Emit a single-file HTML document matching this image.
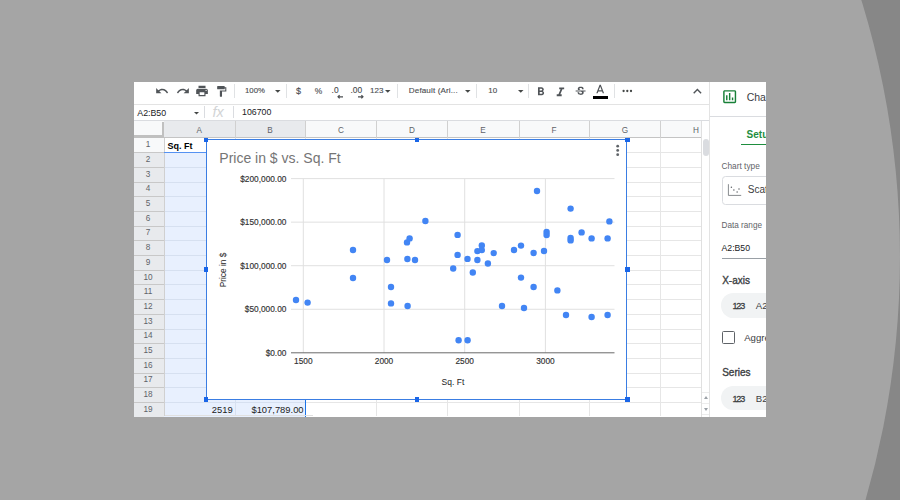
<!DOCTYPE html><html><head><meta charset="utf-8"><style>
html,body{margin:0;padding:0;}
body{width:900px;height:500px;overflow:hidden;position:relative;background:#a5a5a5;font-family:"Liberation Sans", sans-serif;}
div{box-sizing:border-box;}
svg{position:absolute;overflow:visible;}
</style></head><body>
<svg style="left:0;top:0" width="900" height="500" viewBox="0 0 900 500"><path fill="#878787" fill-rule="evenodd" d="M0 0H900V500H0Z M26.31 256.98 m-873.66 0 a873.66 873.66 0 1 0 1747.32 0 a873.66 873.66 0 1 0 -1747.32 0Z"/></svg>
<div style="position:absolute;left:134px;top:82px;width:632px;height:334.5px;background:#fff;overflow:hidden;">
<div style="position:absolute;left:-134px;top:-82px;width:900px;height:500px;">
<div style="position:absolute;left:134px;top:103.6px;width:575px;height:1px;background:#e3e3e3"></div>
<div style="position:absolute;left:134px;top:119.8px;width:575px;height:1px;background:#dadce0"></div>
<svg style="left:155.33px;top:83.905px" width="14.04" height="14.04" viewBox="0 0 24 24"><path fill="#505458" d="M12.5 8c-2.65 0-5.05.99-6.9 2.6L2 7v9h9l-3.62-3.62c1.39-1.16 3.16-1.88 5.12-1.88 3.54 0 6.55 2.31 7.6 5.5l2.37-.78C21.08 11.03 17.15 8 12.5 8z"/></svg>
<svg style="left:175.5991px;top:83.905px" width="14.04" height="14.04" viewBox="0 0 24 24"><path fill="#505458" d="M18.4 10.6C16.55 8.99 14.15 8 11.5 8c-4.65 0-8.58 3.03-9.96 7.22L3.9 16c1.05-3.19 4.05-5.5 7.6-5.5 1.95 0 3.73.72 5.12 1.88L13 16h9V7l-3.6 3.6z"/></svg>
<svg style="left:194.63000000000002px;top:84.245px" width="14.04" height="14.04" viewBox="0 0 24 24"><path fill="#505458" d="M19 8H5c-1.66 0-3 1.34-3 3v6h4v4h12v-4h4v-6c0-1.660-1.34-3-3-3zm-3 11H8v-5h8v5zm3-7c-.55 0-1-.45-1-1s.45-1 1-1 1 .45 1 1-.45 1-1 1zm-1-9H6v4h12V3z"/></svg>
<svg style="left:214.64000000000001px;top:85.0px" width="12.96" height="12.96" viewBox="0 0 24 24"><path fill="#505458" d="M18 4V3c0-.55-.45-1-1-1H5c-.55 0-1 .45-1 1v4c0 .55.45 1 1 1h12c.55 0 1-.45 1-1V6h1v4H9v11c0 .55.45 1 1 1h2c.55 0 1-.45 1-1v-9h8V4h-3z"/></svg>
<div style="position:absolute;left:234px;top:84px;width:1px;height:13.5px;background:#e0e2e4"></div>
<div style="position:absolute;left:286px;top:84px;width:1px;height:13.5px;background:#e0e2e4"></div>
<div style="position:absolute;left:397px;top:84px;width:1px;height:13.5px;background:#e0e2e4"></div>
<div style="position:absolute;left:476px;top:84px;width:1px;height:13.5px;background:#e0e2e4"></div>
<div style="position:absolute;left:528px;top:84px;width:1px;height:13.5px;background:#e0e2e4"></div>
<div style="position:absolute;left:614px;top:84px;width:1px;height:13.5px;background:#e0e2e4"></div>
<div style="position:absolute;left:245px;top:87px;font-size:7.8px;line-height:7.8px;color:#4a4d50;font-weight:normal;white-space:nowrap;-webkit-text-stroke:0.12px #4a4d50;">100%</div>
<svg style="left:274.5px;top:90px" width="5.5" height="2.75" viewBox="0 0 10 5"><path fill="#444746" d="M0 0L5 5L10 0Z"/></svg>
<div style="position:absolute;left:296px;top:86.6px;font-size:9px;line-height:9px;color:#4a4d50;font-weight:normal;white-space:nowrap;-webkit-text-stroke:0.12px #4a4d50;">$</div>
<div style="position:absolute;left:314.8px;top:86.6px;font-size:8.4px;line-height:8.4px;color:#4a4d50;font-weight:normal;white-space:nowrap;-webkit-text-stroke:0.12px #4a4d50;">%</div>
<div style="position:absolute;left:331.6px;top:86.4px;font-size:8.4px;line-height:8.4px;color:#4a4d50;font-weight:normal;white-space:nowrap;-webkit-text-stroke:0.12px #4a4d50;">.0</div>
<svg style="left:337px;top:95px" width="6" height="4" viewBox="0 0 6 4"><path d="M6 1.8H1M2.6 0.2L1 1.8L2.6 3.4" stroke="#4a4d50" stroke-width="1.15" fill="none"/></svg>
<div style="position:absolute;left:350.4px;top:86.4px;font-size:8.4px;line-height:8.4px;color:#4a4d50;font-weight:normal;white-space:nowrap;-webkit-text-stroke:0.12px #4a4d50;">.00</div>
<svg style="left:358px;top:95px" width="6" height="4" viewBox="0 0 6 4"><path d="M0 1.8H5M3.4 0.2L5 1.8L3.4 3.4" stroke="#4a4d50" stroke-width="1.15" fill="none"/></svg>
<div style="position:absolute;left:370px;top:86.8px;font-size:8px;line-height:8px;color:#4a4d50;font-weight:normal;white-space:nowrap;-webkit-text-stroke:0.12px #4a4d50;">123</div>
<svg style="left:385.2px;top:90px" width="5.5" height="2.75" viewBox="0 0 10 5"><path fill="#444746" d="M0 0L5 5L10 0Z"/></svg>
<div style="position:absolute;left:408.8px;top:86.6px;font-size:8.1px;line-height:8.1px;color:#4a4d50;font-weight:normal;white-space:nowrap;-webkit-text-stroke:0.12px #4a4d50;letter-spacing:0.12px;">Default (Ari...</div>
<svg style="left:464.8px;top:90px" width="5.5" height="2.75" viewBox="0 0 10 5"><path fill="#444746" d="M0 0L5 5L10 0Z"/></svg>
<div style="position:absolute;left:488.2px;top:86.9px;font-size:8px;line-height:8px;color:#4a4d50;font-weight:normal;white-space:nowrap;-webkit-text-stroke:0.12px #4a4d50;">10</div>
<svg style="left:517.5px;top:90px" width="5.5" height="2.75" viewBox="0 0 10 5"><path fill="#444746" d="M0 0L5 5L10 0Z"/></svg>
<svg style="left:534.01px;top:85.22px" width="13.68" height="13.68" viewBox="0 0 24 24"><path fill="#505458" d="M15.6 10.79c.97-.67 1.65-1.77 1.65-2.79 0-2.260-1.75-4-4-4H7v14h7.04c2.09 0 3.71-1.7 3.71-3.790 0-1.52-.86-2.82-2.15-3.42zM10 6.5h3c.83 0 1.5.67 1.5 1.5s-.67 1.5-1.5 1.5h-3v-3zm3.5 9H10v-3h3.5c.83 0 1.5.67 1.5 1.5s-.67 1.5-1.5 1.5z"/></svg>
<svg style="left:552.78px;top:84.52px" width="14.879999999999999" height="14.879999999999999" viewBox="0 0 24 24"><path fill="#505458" d="M10 4v3h2.21l-3.42 8H6v3h8v-3h-2.21l3.42-8H18V4z"/></svg>
<svg style="left:573.85px;top:85.465px" width="13.200000000000001" height="13.200000000000001" viewBox="0 0 24 24"><path fill="#505458" d="M7.24 8.75c-.26-.48-.39-1.03-.39-1.67 0-.61.13-1.16.4-1.67.26-.5.63-.93 1.11-1.29.48-.35 1.05-.63 1.7-.83.66-.19 1.39-.29 2.18-.29.81 0 1.54.11 2.21.34.66.22 1.23.54 1.69.94.47.4.83.88 1.080 1.43.25.55.38 1.15.38 1.81h-3.01c0-.31-.05-.59-.15-.85-.09-.27-.24-.49-.44-.68-.2-.19-.45-.33-.75-.44-.3-.1-.66-.16-1.06-.16-.39 0-.74.04-1.03.13-.29.09-.53.21-.72.36-.19.16-.34.34-.44.55-.1.21-.15.43-.15.66 0 .48.25.88.74 1.21.38.25.77.48 1.41.7H7.39c-.05-.08-.11-.17-.15-.25zM21 12v-2H3v2h9.62c.18.07.4.14.55.2.37.17.66.34.87.51.21.17.35.36.43.57.07.2.11.43.11.69 0 .23-.05.45-.14.66-.09.2-.23.38-.42.53-.19.15-.42.26-.71.35-.29.08-.63.13-1.01.13-.43 0-.83-.04-1.18-.13s-.66-.23-.91-.42c-.25-.19-.45-.44-.59-.75-.14-.31-.25-.76-.25-1.21H6.4c0 .55.08 1.13.24 1.58.16.45.37.85.65 1.21.28.35.6.66.98.92.37.26.78.48 1.22.65.44.17.9.3 1.38.39.48.08.96.13 1.44.13.8 0 1.53-.09 2.18-.28s1.21-.45 1.67-.79c.46-.34.82-.77 1.07-1.27s.38-1.07.38-1.71c0-.6-.1-1.14-.31-1.61-.05-.11-.11-.23-.17-.33H21z"/></svg>
<svg style="left:593.2px;top:83.2px" width="14.399999999999999" height="14.399999999999999" viewBox="0 0 24 24"><path fill="#505458" d="M11 3L5.5 17h2.25l1.12-3h6.25l1.12 3h2.25L13 3h-2zm-1.38 9L12 5.67 14.38 12H9.62z"/></svg>
<div style="position:absolute;left:593.2px;top:96.2px;width:14.8px;height:2.6px;background:#000"></div>
<svg style="left:620px;top:88px" width="14" height="6" viewBox="0 0 14 6"><circle cx="3.6" cy="3" r="1.15" fill="#444746"/><circle cx="7.3" cy="3" r="1.15" fill="#444746"/><circle cx="11" cy="3" r="1.15" fill="#444746"/></svg>
<svg style="left:688.8px;top:83.0px" width="16.799999999999997" height="16.799999999999997" viewBox="0 0 24 24"><path fill="#505458" d="M12 8l-6 6 1.41 1.41L12 10.83l4.59 4.58L18 14z"/></svg>
<div style="position:absolute;left:137.3px;top:108.6px;font-size:8.8px;line-height:8.8px;color:#202124;font-weight:normal;white-space:nowrap;">A2:B50</div>
<svg style="left:194px;top:112px" width="5" height="2.5" viewBox="0 0 10 5"><path fill="#444746" d="M0 0L5 5L10 0Z"/></svg>
<div style="position:absolute;left:204.3px;top:106px;width:1px;height:12px;background:#dadce0"></div>
<div style="position:absolute;left:212.6px;top:104.6px;font-size:14.5px;line-height:14.5px;color:#d2d4d6;font-weight:normal;white-space:nowrap;font-family:"Liberation Serif",serif;"><i>fx</i></div>
<div style="position:absolute;left:233.2px;top:106px;width:1px;height:12px;background:#dadce0"></div>
<div style="position:absolute;left:242px;top:108.4px;font-size:8.8px;line-height:8.8px;color:#202124;font-weight:normal;white-space:nowrap;">106700</div>
<div style="position:absolute;left:134px;top:120.5px;width:568px;height:17.099999999999994px;background:#f8f9fa"></div>
<div style="position:absolute;left:164px;top:120.5px;width:141.39999999999998px;height:17.099999999999994px;background:#e8eaed"></div>
<div style="position:absolute;left:134px;top:137.4px;width:568px;height:1px;background:#c4c4c4"></div>
<div style="position:absolute;left:161.5px;top:122px;width:2.5px;height:15.599999999999994px;background:#c0c0c0"></div>
<div style="position:absolute;left:134px;top:134.8px;width:28px;height:2.8px;background:#c0c0c0"></div>
<div style="position:absolute;left:235px;top:120.5px;width:1px;height:17.099999999999994px;background:#d0d0d0"></div>
<div style="position:absolute;left:164px;top:126.8px;width:70.69999999999999px;text-align:center;font-size:8.2px;line-height:8px;color:#5f6368">A</div>
<div style="position:absolute;left:305px;top:120.5px;width:1px;height:17.099999999999994px;background:#d0d0d0"></div>
<div style="position:absolute;left:234.7px;top:126.8px;width:70.69999999999999px;text-align:center;font-size:8.2px;line-height:8px;color:#5f6368">B</div>
<div style="position:absolute;left:376px;top:120.5px;width:1px;height:17.099999999999994px;background:#d0d0d0"></div>
<div style="position:absolute;left:305.4px;top:126.8px;width:70.90000000000003px;text-align:center;font-size:8.2px;line-height:8px;color:#5f6368">C</div>
<div style="position:absolute;left:447px;top:120.5px;width:1px;height:17.099999999999994px;background:#d0d0d0"></div>
<div style="position:absolute;left:376.3px;top:126.8px;width:71.19999999999999px;text-align:center;font-size:8.2px;line-height:8px;color:#5f6368">D</div>
<div style="position:absolute;left:519px;top:120.5px;width:1px;height:17.099999999999994px;background:#d0d0d0"></div>
<div style="position:absolute;left:447.5px;top:126.8px;width:71.20000000000005px;text-align:center;font-size:8.2px;line-height:8px;color:#5f6368">E</div>
<div style="position:absolute;left:589px;top:120.5px;width:1px;height:17.099999999999994px;background:#d0d0d0"></div>
<div style="position:absolute;left:518.7px;top:126.8px;width:70.79999999999995px;text-align:center;font-size:8.2px;line-height:8px;color:#5f6368">F</div>
<div style="position:absolute;left:660px;top:120.5px;width:1px;height:17.099999999999994px;background:#d0d0d0"></div>
<div style="position:absolute;left:589.5px;top:126.8px;width:71.0px;text-align:center;font-size:8.2px;line-height:8px;color:#5f6368">G</div>
<div style="position:absolute;left:701px;top:120.5px;width:1px;height:17.099999999999994px;background:#d0d0d0"></div>
<div style="position:absolute;left:660.5px;top:126.8px;width:70.8px;text-align:center;font-size:8.2px;line-height:8px;color:#5f6368">H</div>
<div style="position:absolute;left:134px;top:137.6px;width:30px;height:15.2px;background:#f8f9fa"></div>
<div style="position:absolute;left:134px;top:141.2px;width:28px;text-align:center;font-size:8.2px;line-height:8px;color:#5f6368">1</div>
<div style="position:absolute;left:134px;top:152.29999999999998px;width:30px;height:15.2px;background:#e8eaed"></div>
<div style="position:absolute;left:134px;top:155.89999999999998px;width:28px;text-align:center;font-size:8.2px;line-height:8px;color:#5f6368">2</div>
<div style="position:absolute;left:164px;top:152.29999999999998px;width:141.39999999999998px;height:15.2px;background:#e8f0fe"></div>
<div style="position:absolute;left:134px;top:167.0px;width:30px;height:15.2px;background:#e8eaed"></div>
<div style="position:absolute;left:134px;top:170.6px;width:28px;text-align:center;font-size:8.2px;line-height:8px;color:#5f6368">3</div>
<div style="position:absolute;left:164px;top:167.0px;width:141.39999999999998px;height:15.2px;background:#e8f0fe"></div>
<div style="position:absolute;left:134px;top:181.7px;width:30px;height:15.2px;background:#e8eaed"></div>
<div style="position:absolute;left:134px;top:185.29999999999998px;width:28px;text-align:center;font-size:8.2px;line-height:8px;color:#5f6368">4</div>
<div style="position:absolute;left:164px;top:181.7px;width:141.39999999999998px;height:15.2px;background:#e8f0fe"></div>
<div style="position:absolute;left:134px;top:196.39999999999998px;width:30px;height:15.2px;background:#e8eaed"></div>
<div style="position:absolute;left:134px;top:199.99999999999997px;width:28px;text-align:center;font-size:8.2px;line-height:8px;color:#5f6368">5</div>
<div style="position:absolute;left:164px;top:196.39999999999998px;width:141.39999999999998px;height:15.2px;background:#e8f0fe"></div>
<div style="position:absolute;left:134px;top:211.1px;width:30px;height:15.2px;background:#e8eaed"></div>
<div style="position:absolute;left:134px;top:214.7px;width:28px;text-align:center;font-size:8.2px;line-height:8px;color:#5f6368">6</div>
<div style="position:absolute;left:164px;top:211.1px;width:141.39999999999998px;height:15.2px;background:#e8f0fe"></div>
<div style="position:absolute;left:134px;top:225.79999999999998px;width:30px;height:15.2px;background:#e8eaed"></div>
<div style="position:absolute;left:134px;top:229.39999999999998px;width:28px;text-align:center;font-size:8.2px;line-height:8px;color:#5f6368">7</div>
<div style="position:absolute;left:164px;top:225.79999999999998px;width:141.39999999999998px;height:15.2px;background:#e8f0fe"></div>
<div style="position:absolute;left:134px;top:240.5px;width:30px;height:15.2px;background:#e8eaed"></div>
<div style="position:absolute;left:134px;top:244.1px;width:28px;text-align:center;font-size:8.2px;line-height:8px;color:#5f6368">8</div>
<div style="position:absolute;left:164px;top:240.5px;width:141.39999999999998px;height:15.2px;background:#e8f0fe"></div>
<div style="position:absolute;left:134px;top:255.2px;width:30px;height:15.2px;background:#e8eaed"></div>
<div style="position:absolute;left:134px;top:258.8px;width:28px;text-align:center;font-size:8.2px;line-height:8px;color:#5f6368">9</div>
<div style="position:absolute;left:164px;top:255.2px;width:141.39999999999998px;height:15.2px;background:#e8f0fe"></div>
<div style="position:absolute;left:134px;top:269.9px;width:30px;height:15.2px;background:#e8eaed"></div>
<div style="position:absolute;left:134px;top:273.5px;width:28px;text-align:center;font-size:8.2px;line-height:8px;color:#5f6368">10</div>
<div style="position:absolute;left:164px;top:269.9px;width:141.39999999999998px;height:15.2px;background:#e8f0fe"></div>
<div style="position:absolute;left:134px;top:284.6px;width:30px;height:15.2px;background:#e8eaed"></div>
<div style="position:absolute;left:134px;top:288.20000000000005px;width:28px;text-align:center;font-size:8.2px;line-height:8px;color:#5f6368">11</div>
<div style="position:absolute;left:164px;top:284.6px;width:141.39999999999998px;height:15.2px;background:#e8f0fe"></div>
<div style="position:absolute;left:134px;top:299.29999999999995px;width:30px;height:15.2px;background:#e8eaed"></div>
<div style="position:absolute;left:134px;top:302.9px;width:28px;text-align:center;font-size:8.2px;line-height:8px;color:#5f6368">12</div>
<div style="position:absolute;left:164px;top:299.29999999999995px;width:141.39999999999998px;height:15.2px;background:#e8f0fe"></div>
<div style="position:absolute;left:134px;top:314.0px;width:30px;height:15.2px;background:#e8eaed"></div>
<div style="position:absolute;left:134px;top:317.6px;width:28px;text-align:center;font-size:8.2px;line-height:8px;color:#5f6368">13</div>
<div style="position:absolute;left:164px;top:314.0px;width:141.39999999999998px;height:15.2px;background:#e8f0fe"></div>
<div style="position:absolute;left:134px;top:328.7px;width:30px;height:15.2px;background:#e8eaed"></div>
<div style="position:absolute;left:134px;top:332.3px;width:28px;text-align:center;font-size:8.2px;line-height:8px;color:#5f6368">14</div>
<div style="position:absolute;left:164px;top:328.7px;width:141.39999999999998px;height:15.2px;background:#e8f0fe"></div>
<div style="position:absolute;left:134px;top:343.4px;width:30px;height:15.2px;background:#e8eaed"></div>
<div style="position:absolute;left:134px;top:347.0px;width:28px;text-align:center;font-size:8.2px;line-height:8px;color:#5f6368">15</div>
<div style="position:absolute;left:164px;top:343.4px;width:141.39999999999998px;height:15.2px;background:#e8f0fe"></div>
<div style="position:absolute;left:134px;top:358.1px;width:30px;height:15.2px;background:#e8eaed"></div>
<div style="position:absolute;left:134px;top:361.70000000000005px;width:28px;text-align:center;font-size:8.2px;line-height:8px;color:#5f6368">16</div>
<div style="position:absolute;left:164px;top:358.1px;width:141.39999999999998px;height:15.2px;background:#e8f0fe"></div>
<div style="position:absolute;left:134px;top:372.79999999999995px;width:30px;height:15.2px;background:#e8eaed"></div>
<div style="position:absolute;left:134px;top:376.4px;width:28px;text-align:center;font-size:8.2px;line-height:8px;color:#5f6368">17</div>
<div style="position:absolute;left:164px;top:372.79999999999995px;width:141.39999999999998px;height:15.2px;background:#e8f0fe"></div>
<div style="position:absolute;left:134px;top:387.5px;width:30px;height:15.2px;background:#e8eaed"></div>
<div style="position:absolute;left:134px;top:391.1px;width:28px;text-align:center;font-size:8.2px;line-height:8px;color:#5f6368">18</div>
<div style="position:absolute;left:164px;top:387.5px;width:141.39999999999998px;height:15.2px;background:#e8f0fe"></div>
<div style="position:absolute;left:134px;top:402.19999999999993px;width:30px;height:15.2px;background:#e8eaed"></div>
<div style="position:absolute;left:134px;top:405.79999999999995px;width:28px;text-align:center;font-size:8.2px;line-height:8px;color:#5f6368">19</div>
<div style="position:absolute;left:164px;top:402.19999999999993px;width:141.39999999999998px;height:15.2px;background:#e8f0fe"></div>
<div style="position:absolute;left:164px;top:152px;width:537px;height:1px;background:#e6e6e6"></div>
<div style="position:absolute;left:164px;top:152px;width:141px;height:1px;background:#d6e0f0"></div>
<div style="position:absolute;left:134px;top:152px;width:30px;height:1px;background:#c8c8c8"></div>
<div style="position:absolute;left:164px;top:167px;width:537px;height:1px;background:#e6e6e6"></div>
<div style="position:absolute;left:164px;top:167px;width:141px;height:1px;background:#d6e0f0"></div>
<div style="position:absolute;left:134px;top:167px;width:30px;height:1px;background:#c8c8c8"></div>
<div style="position:absolute;left:164px;top:182px;width:537px;height:1px;background:#e6e6e6"></div>
<div style="position:absolute;left:164px;top:182px;width:141px;height:1px;background:#d6e0f0"></div>
<div style="position:absolute;left:134px;top:182px;width:30px;height:1px;background:#c8c8c8"></div>
<div style="position:absolute;left:164px;top:196px;width:537px;height:1px;background:#e6e6e6"></div>
<div style="position:absolute;left:164px;top:196px;width:141px;height:1px;background:#d6e0f0"></div>
<div style="position:absolute;left:134px;top:196px;width:30px;height:1px;background:#c8c8c8"></div>
<div style="position:absolute;left:164px;top:211px;width:537px;height:1px;background:#e6e6e6"></div>
<div style="position:absolute;left:164px;top:211px;width:141px;height:1px;background:#d6e0f0"></div>
<div style="position:absolute;left:134px;top:211px;width:30px;height:1px;background:#c8c8c8"></div>
<div style="position:absolute;left:164px;top:226px;width:537px;height:1px;background:#e6e6e6"></div>
<div style="position:absolute;left:164px;top:226px;width:141px;height:1px;background:#d6e0f0"></div>
<div style="position:absolute;left:134px;top:226px;width:30px;height:1px;background:#c8c8c8"></div>
<div style="position:absolute;left:164px;top:240px;width:537px;height:1px;background:#e6e6e6"></div>
<div style="position:absolute;left:164px;top:240px;width:141px;height:1px;background:#d6e0f0"></div>
<div style="position:absolute;left:134px;top:240px;width:30px;height:1px;background:#c8c8c8"></div>
<div style="position:absolute;left:164px;top:255px;width:537px;height:1px;background:#e6e6e6"></div>
<div style="position:absolute;left:164px;top:255px;width:141px;height:1px;background:#d6e0f0"></div>
<div style="position:absolute;left:134px;top:255px;width:30px;height:1px;background:#c8c8c8"></div>
<div style="position:absolute;left:164px;top:270px;width:537px;height:1px;background:#e6e6e6"></div>
<div style="position:absolute;left:164px;top:270px;width:141px;height:1px;background:#d6e0f0"></div>
<div style="position:absolute;left:134px;top:270px;width:30px;height:1px;background:#c8c8c8"></div>
<div style="position:absolute;left:164px;top:284px;width:537px;height:1px;background:#e6e6e6"></div>
<div style="position:absolute;left:164px;top:284px;width:141px;height:1px;background:#d6e0f0"></div>
<div style="position:absolute;left:134px;top:284px;width:30px;height:1px;background:#c8c8c8"></div>
<div style="position:absolute;left:164px;top:299px;width:537px;height:1px;background:#e6e6e6"></div>
<div style="position:absolute;left:164px;top:299px;width:141px;height:1px;background:#d6e0f0"></div>
<div style="position:absolute;left:134px;top:299px;width:30px;height:1px;background:#c8c8c8"></div>
<div style="position:absolute;left:164px;top:314px;width:537px;height:1px;background:#e6e6e6"></div>
<div style="position:absolute;left:164px;top:314px;width:141px;height:1px;background:#d6e0f0"></div>
<div style="position:absolute;left:134px;top:314px;width:30px;height:1px;background:#c8c8c8"></div>
<div style="position:absolute;left:164px;top:329px;width:537px;height:1px;background:#e6e6e6"></div>
<div style="position:absolute;left:164px;top:329px;width:141px;height:1px;background:#d6e0f0"></div>
<div style="position:absolute;left:134px;top:329px;width:30px;height:1px;background:#c8c8c8"></div>
<div style="position:absolute;left:164px;top:343px;width:537px;height:1px;background:#e6e6e6"></div>
<div style="position:absolute;left:164px;top:343px;width:141px;height:1px;background:#d6e0f0"></div>
<div style="position:absolute;left:134px;top:343px;width:30px;height:1px;background:#c8c8c8"></div>
<div style="position:absolute;left:164px;top:358px;width:537px;height:1px;background:#e6e6e6"></div>
<div style="position:absolute;left:164px;top:358px;width:141px;height:1px;background:#d6e0f0"></div>
<div style="position:absolute;left:134px;top:358px;width:30px;height:1px;background:#c8c8c8"></div>
<div style="position:absolute;left:164px;top:373px;width:537px;height:1px;background:#e6e6e6"></div>
<div style="position:absolute;left:164px;top:373px;width:141px;height:1px;background:#d6e0f0"></div>
<div style="position:absolute;left:134px;top:373px;width:30px;height:1px;background:#c8c8c8"></div>
<div style="position:absolute;left:164px;top:387px;width:537px;height:1px;background:#e6e6e6"></div>
<div style="position:absolute;left:164px;top:387px;width:141px;height:1px;background:#d6e0f0"></div>
<div style="position:absolute;left:134px;top:387px;width:30px;height:1px;background:#c8c8c8"></div>
<div style="position:absolute;left:164px;top:402px;width:537px;height:1px;background:#e6e6e6"></div>
<div style="position:absolute;left:164px;top:402px;width:141px;height:1px;background:#d6e0f0"></div>
<div style="position:absolute;left:134px;top:402px;width:30px;height:1px;background:#c8c8c8"></div>
<div style="position:absolute;left:164px;top:417px;width:537px;height:1px;background:#e6e6e6"></div>
<div style="position:absolute;left:164px;top:417px;width:141px;height:1px;background:#d6e0f0"></div>
<div style="position:absolute;left:134px;top:417px;width:30px;height:1px;background:#c8c8c8"></div>
<div style="position:absolute;left:164px;top:137.6px;width:1px;height:278.9px;background:#d0d0d0"></div>
<div style="position:absolute;left:235px;top:137.6px;width:1px;height:278.9px;background:#d6e0f0"></div>
<div style="position:absolute;left:305px;top:137.6px;width:1px;height:278.9px;background:#e6e6e6"></div>
<div style="position:absolute;left:376px;top:137.6px;width:1px;height:278.9px;background:#e6e6e6"></div>
<div style="position:absolute;left:447px;top:137.6px;width:1px;height:278.9px;background:#e6e6e6"></div>
<div style="position:absolute;left:519px;top:137.6px;width:1px;height:278.9px;background:#e6e6e6"></div>
<div style="position:absolute;left:589px;top:137.6px;width:1px;height:278.9px;background:#e6e6e6"></div>
<div style="position:absolute;left:660px;top:137.6px;width:1px;height:278.9px;background:#e6e6e6"></div>
<div style="position:absolute;left:701px;top:137.6px;width:1px;height:278.9px;background:#e6e6e6"></div>
<div style="position:absolute;left:164px;top:151.9px;width:141.4px;height:1.1px;background:#5592f2"></div>
<div style="position:absolute;left:304.8px;top:152px;width:1.2px;height:265px;background:#1a73e8"></div>
<div style="position:absolute;left:167.5px;top:141.6px;font-size:9px;line-height:9px;color:#000;font-weight:bold;white-space:nowrap;">Sq. Ft</div>
<div style="position:absolute;left:164px;top:405.4px;width:68.6px;text-align:right;font-size:9.4px;line-height:9px;color:#222">2519</div>
<div style="position:absolute;left:234.7px;top:405.4px;width:68.9px;text-align:right;font-size:9.4px;line-height:9px;color:#222">$107,789.00</div>
<div style="position:absolute;left:165px;top:415.2px;width:148px;height:1px;background:#e0e0e0"></div>
<div style="position:absolute;left:701.5px;top:137.6px;width:8px;height:278.9px;background:#fff"></div>
<div style="position:absolute;left:701.3px;top:120.5px;width:0.8px;height:296.0px;background:#e0e0e0"></div>
<div style="position:absolute;left:703px;top:139px;width:6px;height:17px;background:#dadce0;border-radius:3px"></div>
<div style="position:absolute;left:702px;top:392px;width:7.5px;height:1px;background:#ececec"></div>
<div style="position:absolute;left:702px;top:403.2px;width:7.5px;height:1px;background:#ececec"></div>
<div style="position:absolute;left:702px;top:414.4px;width:7.5px;height:1px;background:#ececec"></div>
<svg style="left:704px;top:396px" width="4" height="3" viewBox="0 0 4 3"><path d="M0 3L2 0L4 3Z" fill="#9aa0a6"/></svg>
<svg style="left:704px;top:407.5px" width="4" height="3" viewBox="0 0 4 3"><path d="M0 0L2 3L4 0Z" fill="#9aa0a6"/></svg>
</div></div>
<div style="position:absolute;left:205.7px;top:138.6px;width:421.7px;height:261.29999999999995px;background:#fff;border:1.5px solid #3a7de3;"></div>
<div style="position:absolute;left:204.0px;top:138.1px;width:4.4px;height:3.6px;background:#1a66e8"></div>
<div style="position:absolute;left:204.0px;top:266.8px;width:4.4px;height:5px;background:#1a66e8"></div>
<div style="position:absolute;left:204.0px;top:397.0px;width:4.4px;height:4.8px;background:#1a66e8"></div>
<div style="position:absolute;left:414.8px;top:138.1px;width:4.4px;height:3.6px;background:#1a66e8"></div>
<div style="position:absolute;left:414.8px;top:397.0px;width:4.4px;height:4.8px;background:#1a66e8"></div>
<div style="position:absolute;left:625.3px;top:138.1px;width:4.4px;height:3.6px;background:#1a66e8"></div>
<div style="position:absolute;left:625.3px;top:266.8px;width:4.4px;height:5px;background:#1a66e8"></div>
<div style="position:absolute;left:625.3px;top:397.0px;width:4.4px;height:4.8px;background:#1a66e8"></div>
<svg style="left:614px;top:143px" width="8" height="14" viewBox="0 0 8 14"><circle cx="3.7" cy="3.2" r="1.4" fill="#5f6368"/><circle cx="3.7" cy="7.4" r="1.4" fill="#5f6368"/><circle cx="3.7" cy="11.7" r="1.4" fill="#5f6368"/></svg>
<div style="position:absolute;left:219.3px;top:151px;font-size:14px;line-height:14px;color:#757575;font-weight:normal;white-space:nowrap;">Price in $ vs. Sq. Ft</div>
<svg style="left:0;top:0" width="900" height="500" viewBox="0 0 900 500"><line x1="291" y1="309.25" x2="614.5" y2="309.25" stroke="#e0e0e0" stroke-width="1"/><line x1="291" y1="265.70000000000005" x2="614.5" y2="265.70000000000005" stroke="#e0e0e0" stroke-width="1"/><line x1="291" y1="222.15000000000003" x2="614.5" y2="222.15000000000003" stroke="#e0e0e0" stroke-width="1"/><line x1="291" y1="178.60000000000002" x2="614.5" y2="178.60000000000002" stroke="#e0e0e0" stroke-width="1"/><line x1="303.3" y1="178.60000000000002" x2="303.3" y2="352.8" stroke="#e0e0e0" stroke-width="1"/><line x1="384.0" y1="178.60000000000002" x2="384.0" y2="352.8" stroke="#e0e0e0" stroke-width="1"/><line x1="464.70000000000005" y1="178.60000000000002" x2="464.70000000000005" y2="352.8" stroke="#e0e0e0" stroke-width="1"/><line x1="545.4000000000001" y1="178.60000000000002" x2="545.4000000000001" y2="352.8" stroke="#e0e0e0" stroke-width="1"/><line x1="291" y1="352.8" x2="614.5" y2="352.8" stroke="#6a6a6a" stroke-width="1"/><circle cx="296" cy="300" r="3.2" fill="#4285f4"/><circle cx="307.6" cy="302.6" r="3.2" fill="#4285f4"/><circle cx="353" cy="250" r="3.2" fill="#4285f4"/><circle cx="353" cy="278" r="3.2" fill="#4285f4"/><circle cx="387" cy="260" r="3.2" fill="#4285f4"/><circle cx="391" cy="287" r="3.2" fill="#4285f4"/><circle cx="391" cy="303.4" r="3.2" fill="#4285f4"/><circle cx="407" cy="242.4" r="3.2" fill="#4285f4"/><circle cx="409.6" cy="238.4" r="3.2" fill="#4285f4"/><circle cx="407.4" cy="259" r="3.2" fill="#4285f4"/><circle cx="415" cy="260" r="3.2" fill="#4285f4"/><circle cx="407.6" cy="306" r="3.2" fill="#4285f4"/><circle cx="425.4" cy="221" r="3.2" fill="#4285f4"/><circle cx="453.2" cy="268.5" r="3.2" fill="#4285f4"/><circle cx="457.6" cy="234.9" r="3.2" fill="#4285f4"/><circle cx="457.6" cy="254.9" r="3.2" fill="#4285f4"/><circle cx="458.6" cy="340.3" r="3.2" fill="#4285f4"/><circle cx="467.6" cy="340.3" r="3.2" fill="#4285f4"/><circle cx="467.5" cy="258.9" r="3.2" fill="#4285f4"/><circle cx="472.8" cy="272.5" r="3.2" fill="#4285f4"/><circle cx="477.4" cy="251.1" r="3.2" fill="#4285f4"/><circle cx="481.8" cy="245.4" r="3.2" fill="#4285f4"/><circle cx="481.8" cy="250.1" r="3.2" fill="#4285f4"/><circle cx="477.4" cy="260" r="3.2" fill="#4285f4"/><circle cx="487.9" cy="263.5" r="3.2" fill="#4285f4"/><circle cx="493.7" cy="253.1" r="3.2" fill="#4285f4"/><circle cx="502" cy="306" r="3.2" fill="#4285f4"/><circle cx="514" cy="250" r="3.2" fill="#4285f4"/><circle cx="521" cy="245.6" r="3.2" fill="#4285f4"/><circle cx="521" cy="277.6" r="3.2" fill="#4285f4"/><circle cx="524" cy="308" r="3.2" fill="#4285f4"/><circle cx="533.6" cy="253" r="3.2" fill="#4285f4"/><circle cx="533.6" cy="287" r="3.2" fill="#4285f4"/><circle cx="537" cy="191" r="3.2" fill="#4285f4"/><circle cx="544" cy="251" r="3.2" fill="#4285f4"/><circle cx="546.6" cy="232" r="3.2" fill="#4285f4"/><circle cx="546.6" cy="235" r="3.2" fill="#4285f4"/><circle cx="557.4" cy="290.4" r="3.2" fill="#4285f4"/><circle cx="566" cy="315" r="3.2" fill="#4285f4"/><circle cx="570.6" cy="208.6" r="3.2" fill="#4285f4"/><circle cx="570.6" cy="238" r="3.2" fill="#4285f4"/><circle cx="570.6" cy="240.4" r="3.2" fill="#4285f4"/><circle cx="581.6" cy="232.4" r="3.2" fill="#4285f4"/><circle cx="591.6" cy="238.4" r="3.2" fill="#4285f4"/><circle cx="591.6" cy="317" r="3.2" fill="#4285f4"/><circle cx="607.6" cy="238.4" r="3.2" fill="#4285f4"/><circle cx="607.6" cy="315" r="3.2" fill="#4285f4"/><circle cx="609.4" cy="221.4" r="3.2" fill="#4285f4"/></svg>
<div style="position:absolute;left:180px;top:348.90000000000003px;width:106.4px;text-align:right;font-size:8.3px;line-height:9px;color:#333;-webkit-text-stroke:0.15px #333">$0.00</div>
<div style="position:absolute;left:180px;top:305.35px;width:106.4px;text-align:right;font-size:8.3px;line-height:9px;color:#333;-webkit-text-stroke:0.15px #333">$50,000.00</div>
<div style="position:absolute;left:180px;top:261.80000000000007px;width:106.4px;text-align:right;font-size:8.3px;line-height:9px;color:#333;-webkit-text-stroke:0.15px #333">$100,000.00</div>
<div style="position:absolute;left:180px;top:218.25000000000003px;width:106.4px;text-align:right;font-size:8.3px;line-height:9px;color:#333;-webkit-text-stroke:0.15px #333">$150,000.00</div>
<div style="position:absolute;left:180px;top:174.70000000000002px;width:106.4px;text-align:right;font-size:8.3px;line-height:9px;color:#333;-webkit-text-stroke:0.15px #333">$200,000.00</div>
<div style="position:absolute;left:273.3px;top:356.5px;width:60px;text-align:center;font-size:8.3px;line-height:9px;color:#333;-webkit-text-stroke:0.15px #333">1500</div>
<div style="position:absolute;left:354.0px;top:356.5px;width:60px;text-align:center;font-size:8.3px;line-height:9px;color:#333;-webkit-text-stroke:0.15px #333">2000</div>
<div style="position:absolute;left:434.70000000000005px;top:356.5px;width:60px;text-align:center;font-size:8.3px;line-height:9px;color:#333;-webkit-text-stroke:0.15px #333">2500</div>
<div style="position:absolute;left:515.4000000000001px;top:356.5px;width:60px;text-align:center;font-size:8.3px;line-height:9px;color:#333;-webkit-text-stroke:0.15px #333">3000</div>
<div style="position:absolute;left:441.6px;top:377.5px;font-size:8.5px;line-height:8.5px;color:#222;font-weight:normal;white-space:nowrap;">Sq. Ft</div>
<div style="position:absolute;left:222.8px;top:270.3px;transform:translate(-50%,-50%) rotate(-90deg);font-size:8.3px;line-height:9px;color:#222;white-space:nowrap">Price in $</div>
<div style="position:absolute;left:709px;top:82px;width:57px;height:334.5px;background:#fff;border-left:0.8px solid #e3e3e3;overflow:hidden">
<div style="position:absolute;left:-709px;top:-82px;width:900px;height:500px;">
<div style="position:absolute;left:709px;top:116.3px;width:100px;height:1px;background:#dadce0"></div>
<svg style="left:720.4333333333334px;top:88.13333333333333px" width="17.333333333333332" height="17.333333333333332" viewBox="0 0 24 24"><path fill="#188038" d="M9 17H7v-7h2v7zm4 0h-2V7h2v10zm4 0h-2v-4h2v4zm2 2H5V5h14v14zm0-16H5c-1.1 0-2 .9-2 2v14c0 1.1.9 2 2 2h14c1.1 0 2-.9 2-2V5c0-1.1-.9-2-2-2z"/></svg>
<div style="position:absolute;left:745.7px;top:92px;font-size:10.5px;line-height:10.5px;color:#3c4043;font-weight:normal;white-space:nowrap;">Chart editor</div>
<div style="position:absolute;left:745.6px;top:130.2px;font-size:10px;line-height:10px;color:#1e8e3e;font-weight:bold;white-space:nowrap;">Setup</div>
<div style="position:absolute;left:740.2px;top:143.5px;width:60px;height:1.9px;background:#1e8e3e"></div>
<div style="position:absolute;left:720.5px;top:161.6px;font-size:8.3px;line-height:8.3px;color:#5f6368;font-weight:normal;white-space:nowrap;">Chart type</div>
<div style="position:absolute;left:720.6px;top:175.8px;width:80px;height:29.6px;border:0.9px solid #dadce0;border-radius:3.5px"></div>
<svg style="left:727px;top:184px" width="14" height="12" viewBox="0 0 14 12"><path d="M0.4 0.2V11.4H13.2" stroke="#5f6368" stroke-width="0.75" fill="none"/><circle cx="3.4" cy="3.2" r="0.75" fill="#5f6368"/><circle cx="5.9" cy="6.1" r="0.75" fill="#5f6368"/><circle cx="9.1" cy="7.9" r="0.75" fill="#5f6368"/><circle cx="11" cy="5.1" r="0.75" fill="#5f6368"/></svg>
<div style="position:absolute;left:746.8px;top:185.2px;font-size:10px;line-height:10px;color:#3c4043;font-weight:normal;white-space:nowrap;">Scatter chart</div>
<div style="position:absolute;left:720.5px;top:221.8px;font-size:8.2px;line-height:8.2px;color:#5f6368;font-weight:normal;white-space:nowrap;">Data range</div>
<div style="position:absolute;left:720.5px;top:244px;font-size:8.7px;line-height:8.7px;color:#202124;font-weight:normal;white-space:nowrap;">A2:B50</div>
<div style="position:absolute;left:721px;top:257.6px;width:80px;height:0.8px;background:#9aa0a6"></div>
<div style="position:absolute;left:721.2px;top:275.5px;font-size:10px;line-height:10px;color:#3c4043;font-weight:normal;white-space:nowrap;-webkit-text-stroke:0.35px #3c4043;">X-axis</div>
<div style="position:absolute;left:720px;top:293px;width:80px;height:24.6px;background:#f1f3f4;border-radius:12.3px"></div>
<div style="position:absolute;left:731.4px;top:301.6px;font-size:9px;line-height:9px;color:#3c4043;font-weight:normal;white-space:nowrap;letter-spacing:-1.1px;-webkit-text-stroke:0.3px #3c4043;">123</div>
<div style="position:absolute;left:754.8px;top:300.8px;font-size:9.6px;line-height:9.6px;color:#3c4043;font-weight:normal;white-space:nowrap;">A2:A50</div>
<div style="position:absolute;left:721.2px;top:331.2px;width:12.8px;height:12.8px;border:1.8px solid #5f6368;border-radius:1.5px"></div>
<div style="position:absolute;left:743.2px;top:333.4px;font-size:9.6px;line-height:9.6px;color:#3c4043;font-weight:normal;white-space:nowrap;">Aggregate</div>
<div style="position:absolute;left:721.2px;top:367.8px;font-size:10px;line-height:10px;color:#3c4043;font-weight:normal;white-space:nowrap;-webkit-text-stroke:0.35px #3c4043;">Series</div>
<div style="position:absolute;left:720px;top:385.6px;width:80px;height:24.8px;background:#f1f3f4;border-radius:12.4px"></div>
<div style="position:absolute;left:731.4px;top:394.6px;font-size:9px;line-height:9px;color:#3c4043;font-weight:normal;white-space:nowrap;letter-spacing:-1.1px;-webkit-text-stroke:0.3px #3c4043;">123</div>
<div style="position:absolute;left:754.8px;top:394.2px;font-size:9.6px;line-height:9.6px;color:#3c4043;font-weight:normal;white-space:nowrap;">B2:B50</div>
</div></div>
</body></html>
